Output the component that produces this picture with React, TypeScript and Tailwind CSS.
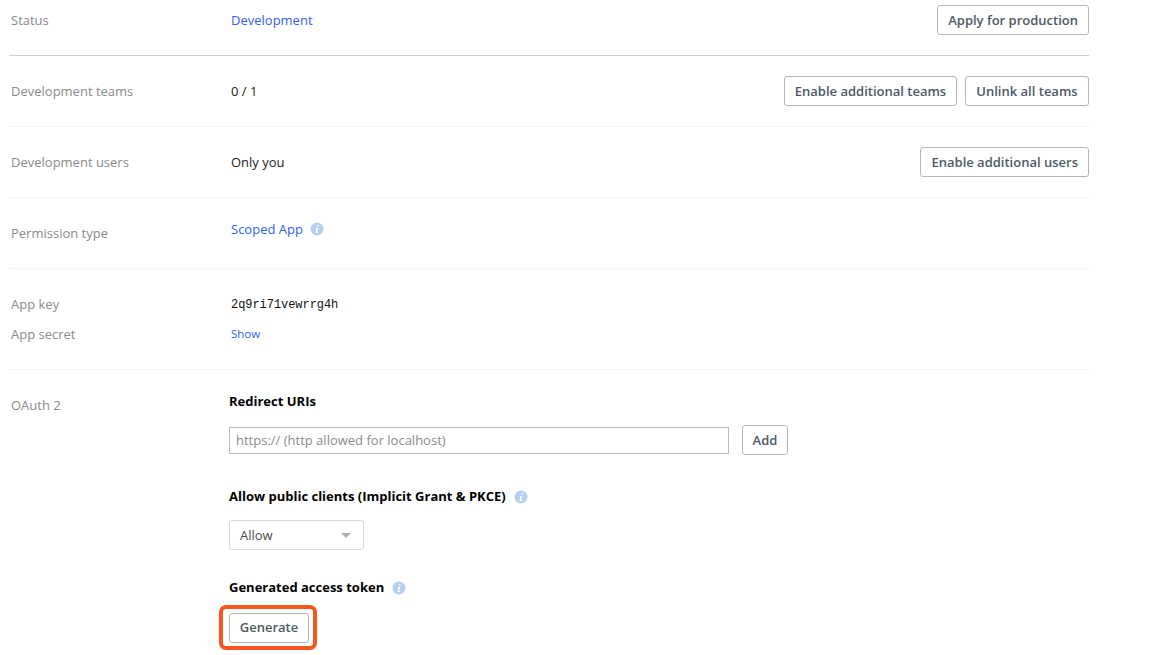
function InfoIcon({ className = "" }: { className?: string }) {
  return (
    <svg width="14" height="14" viewBox="0 0 14 14" className={"shrink-0 " + className}>
      <circle cx="7" cy="7" r="6.5" fill="#b4d2ef" />
      <path d="M7.9 2.9a.9.9 0 1 1-.1 1.8.9.9 0 0 1 .1-1.8zM6 6h2.2l-1 4.1h.9l-.2.9H5.5l1-4.1H5.8z" fill="#fff" />
    </svg>
  );
}

function Btn({ children, className = "" }: { children: React.ReactNode; className?: string }) {
  return (
    <button
      type="button"
      className={"h-[30px] px-[10px] bg-white border border-[#b5b5b5] rounded-[3px] text-[13px] font-semibold text-[#4d5965] whitespace-nowrap " + className}
    >
      {children}
    </button>
  );
}

function Row({ label, children, actions, strong = false }: { label: string; children: React.ReactNode; actions?: React.ReactNode; strong?: boolean }) {
  return (
    <div className={"flex items-center h-[71px] border-b " + (strong ? "border-[#cfcfcf]" : "border-[#eef6f7]")}>
      <div className="w-[222px] pt-[2px] pl-[2px] text-[#8a8a8a]">{label}</div>
      <div className="flex-1 pt-[2px] text-[#1a1a1a]">{children}</div>
      <div className="flex gap-2">{actions}</div>
    </div>
  );
}

export default function App() {
  return (
    <div className="w-[1153px] h-[655px] overflow-hidden bg-white pl-[9px] font-['Open_Sans',sans-serif] text-[13px]">
      <div className="w-[1080px] -mt-[15px]">
        <Row label="Status" strong actions={<Btn className="pt-[2px]">Apply for production</Btn>}>
          <a className="text-[#2f62f5]">Development</a>
        </Row>
        <Row
          label="Development teams"
          actions={
            <>
              <Btn className="w-[173px] !px-0 pt-[2px]">Enable additional teams</Btn>
              <Btn className="w-[124px] !px-0 pt-[2px]">Unlink all teams</Btn>
            </>
          }
        >
          0 / 1
        </Row>
        <Row label="Development users" actions={<Btn className="pt-[2px]">Enable additional users</Btn>}>
          Only you
        </Row>
        <Row label="Permission type">
          <div className="flex items-center gap-[7px] -mt-[8px]">
            <a className="text-[#2f62f5]">Scoped App</a>
            <InfoIcon className="-mt-[2px]" />
          </div>
        </Row>

        <div className="flex h-[101px] pt-[25px] border-b border-[#eef6f7]">
          <div className="w-[222px] pl-[2px] text-[#8a8a8a]">
            <div className="h-[30px] leading-[20px]">App key</div>
            <div className="leading-[20px]">App secret</div>
          </div>
          <div className="pt-[1px]">
            <div className="h-[29px] leading-[20px] font-['Liberation_Mono',monospace] text-[12px] tracking-[-0.05px] text-[#111]">2q9ri71vewrrg4h</div>
            <a className="block leading-[20px] text-[11.5px] text-[#2f62f5]">Show</a>
          </div>
        </div>

        <div className="flex pt-[25px]">
          <div className="w-[220px] pl-[2px] leading-[20px] text-[#8a8a8a]">OAuth 2</div>
          <div className="-mt-[1px]">
            <div className="h-[16px] leading-[14px] font-bold text-black">Redirect URIs</div>
            <div className="flex items-center gap-[13px] mt-[15px] h-[30px]">
              <input
                readOnly
                placeholder="https:// (http allowed for localhost)"
                className="w-[500px] h-[27px] px-[6px] border border-[#bdbdbd] bg-white text-[13px] placeholder:text-[#8c8c8c] outline-none"
              />
              <Btn className="w-[46px] !px-0 pt-[2px]">Add</Btn>
            </div>

            <div className="flex items-center gap-[8px] mt-[33px] h-[18px] font-bold text-black">
              Allow public clients (Implicit Grant &amp; PKCE)
              <InfoIcon />
            </div>
            <div className="flex items-center justify-between w-[135px] h-[30px] mt-[14px] pl-[10px] pr-[12px] border border-[#d9d9d9] rounded-[3px] text-[#4a4a4a]">
              <span className="pt-[2px]">Allow</span>
              <span className="w-0 h-0 border-x-[5px] border-x-transparent border-t-[5px] border-t-[#b0b0b0]" />
            </div>

            <div className="flex items-center gap-[8px] mt-[29px] h-[18px] font-bold text-black">
              Generated access token
              <InfoIcon />
            </div>
            <div className="relative w-[80px] mt-[16px]">
              <Btn className="w-[80px] !px-0">Generate</Btn>
              <div className="absolute -left-[10px] -right-[8px] -top-[8px] -bottom-[7px] border-[4px] border-[#f8561e] rounded-[7px]" />
            </div>
          </div>
        </div>
      </div>
    </div>
  );
}
